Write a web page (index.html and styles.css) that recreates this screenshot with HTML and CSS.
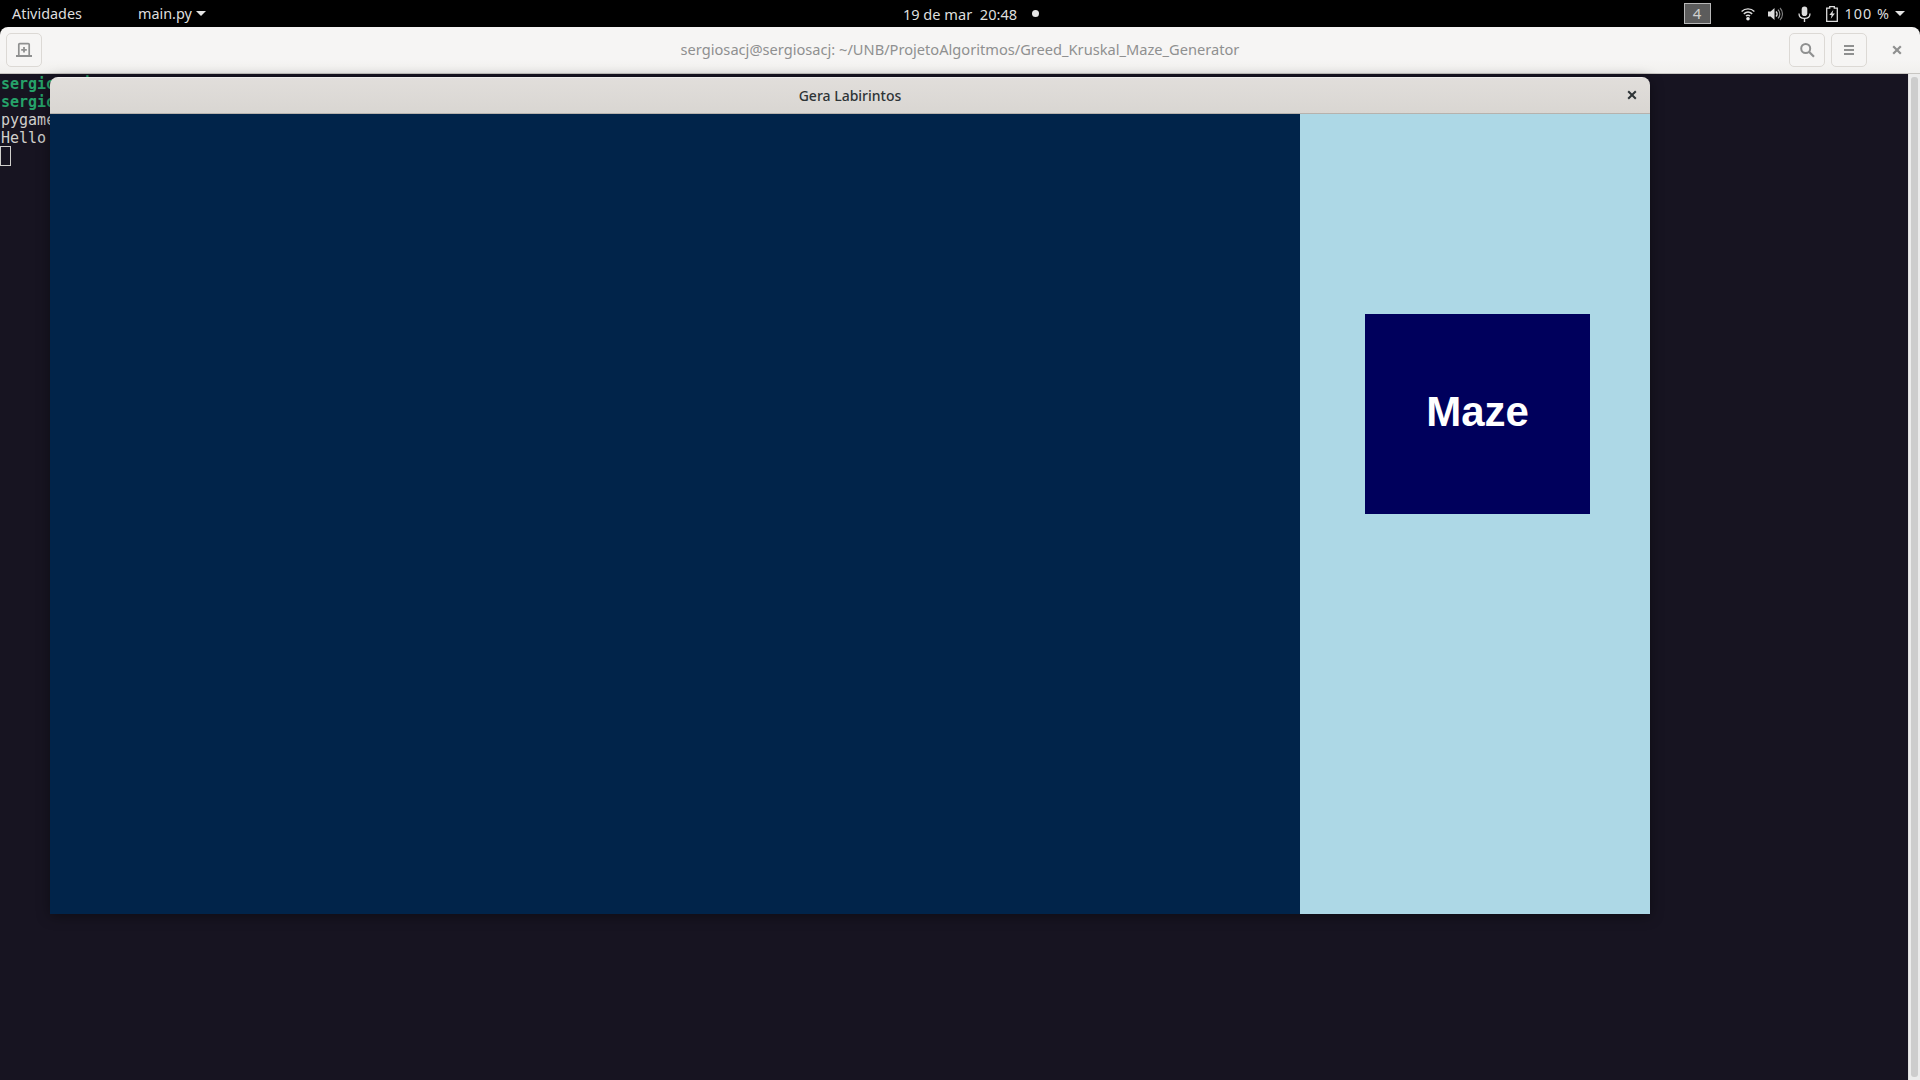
FILE: index.html
```html
<!DOCTYPE html>
<html lang="pt">
<head>
<meta charset="utf-8">
<title>Gera Labirintos</title>
<link rel="stylesheet" href="styles.css">
</head>
<body>
<div class="desktop">
  <header class="topbar">
    <div class="top-left">
      <span class="activities">Atividades</span>
      <span class="appmenu">main.py<span class="caret"></span></span>
    </div>
    <div class="top-center"><span>19 de mar&nbsp; 20:48</span><span class="dot"></span></div>
    <div class="top-right">
      <span class="workspace">4</span>
      <svg class="wifi" width="14" height="14" viewBox="0 0 14 14"><path d="M.6 4.500C4.200 1 9.800 1 13.400 4.500" fill="none" stroke="#dcdcdc" stroke-width="1.400"/><path d="M2.800 6.900c2.500-2.200 5.900-2.200 8.400 0" fill="none" stroke="#dcdcdc" stroke-width="1.400"/><path d="M4.900 9c1.300-1 2.900-1 4.200 0" fill="none" stroke="#dcdcdc" stroke-width="1.400"/><circle cx="7" cy="11.800" r="1.800" fill="#e8e8e8"/></svg>
      <svg class="vol" width="15" height="14" viewBox="0 0 15 14"><path d="M0 4.500h2.600L6.500 1v12L2.600 9.500H0z" fill="#dcdcdc"/><path d="M8 4.500a3.400 3.400 0 0 1 0 5" fill="none" stroke="#dcdcdc" stroke-width="1.400"/><path d="M10 2.600a6.200 6.200 0 0 1 0 8.800" fill="none" stroke="#a0a0a0" stroke-width="1.200"/><path d="M12 1a8.500 8.500 0 0 1 0 12" fill="none" stroke="#7c7c7c" stroke-width="1.100"/></svg>
      <svg class="mic" width="13" height="16" viewBox="0 0 13 16"><rect x="3.700" y=".5" width="5.600" height="9.500" rx="2.800" fill="#dcdcdc"/><path d="M1 7.400c0 3.300 2.400 5 5.500 5s5.500-1.700 5.500-5" fill="none" stroke="#dcdcdc" stroke-width="1.300"/><path d="M6.500 12v4" stroke="#dcdcdc" stroke-width="1.400"/></svg>
      <svg class="batt" width="12" height="16" viewBox="0 0 12 16"><path d="M3.700.7h4.600v1.500h3v13.100H.7V2.200h3z" fill="none" stroke="#dcdcdc" stroke-width="1.300"/><path d="M7.300 4 3.300 9h2.300l-.8 3.700L8.900 7.400H6.500z" fill="#dcdcdc"/></svg>
      <span class="pct">100 %<span class="caret pct-caret"></span></span>
    </div>
  </header>

  <section class="terminal">
    <div class="term-header">
      <button class="hbtn tab-btn" aria-label="Nova aba">
        <svg width="16" height="16" viewBox="0 0 16 16"><path d="M2.800 14V2.600a1 1 0 0 1 1-1h8.400a1 1 0 0 1 1 1V14" fill="none" stroke="#8f9090" stroke-width="1.700"/><path d="M0 14h16" stroke="#8f9090" stroke-width="2"/><path d="M8 5v5.600M5.200 7.800h5.600" stroke="#8f9090" stroke-width="1.800"/></svg>
      </button>
      <div class="term-title">sergiosacj@sergiosacj: ~/UNB/ProjetoAlgoritmos/Greed_Kruskal_Maze_Generator</div>
      <button class="hbtn" aria-label="Buscar">
        <svg width="16" height="16" viewBox="0 0 16 16"><circle cx="6.700" cy="6.500" r="4.500" fill="none" stroke="#8f9090" stroke-width="2"/><path d="M10 9.800l5 5" stroke="#8f9090" stroke-width="2.200"/></svg>
      </button>
      <button class="hbtn menu-btn" aria-label="Menu">
        <svg width="16" height="16" viewBox="0 0 16 16"><path d="M3 4h10M3 8h10M3 12h10" stroke="#8f9090" stroke-width="2"/></svg>
      </button>
      <button class="close-btn" aria-label="Fechar">
        <svg width="10" height="10" viewBox="0 0 10 10"><path d="M1.200 1.200l7.600 7.600M8.800 1.200L1.200 8.800" stroke="#8f9090" stroke-width="2.200"/></svg>
      </button>
    </div>
    <div class="term-body">
      <div class="term-text">
        <div class="prompt">sergiosacj</div>
        <div class="prompt">sergiosacj</div>
        <div>pygame</div>
        <div>Hello</div>
        <div class="cursor"></div>
      </div>
      <div class="scrollbar"><div class="thumb"></div></div>
    </div>
  </section>

  <section class="window">
    <div class="win-title">
      <span class="win-name">Gera Labirintos</span>
      <button class="win-close" aria-label="Fechar">
        <svg width="10" height="10" viewBox="0 0 10 10"><path d="M1.200 1.200l7.600 7.600M8.800 1.200L1.200 8.800" stroke="#2e3436" stroke-width="2"/></svg>
      </button>
    </div>
    <div class="win-body">
      <div class="maze-area"></div>
      <aside class="side"><div class="maze-btn">Maze</div></aside>
    </div>
  </section>
</div>
</body>
</html>
```
FILE: styles.css
```css
* { box-sizing: border-box; }
html, body { margin: 0; padding: 0; height: 100%; overflow: hidden; }
body { background: #000; font-family: "Noto Sans", sans-serif; }
button { border: 0; background: none; padding: 0; margin: 0; font: inherit; }

.desktop { position: relative; width: 1920px; height: 1080px; display: flex; flex-direction: column; background: #000; }

.topbar { height: 27px; flex: none; display: grid; grid-template-columns: 1fr auto 1fr; align-items: center; color: #dedede; font-size: 14.400px; }
.top-left { display: flex; align-items: center; padding-left: 12px; gap: 56px; }
.appmenu { display: flex; align-items: center; }
.caret { display: inline-block; width: 0; height: 0; margin-left: 4px; border-left: 5.500px solid transparent; border-right: 5.500px solid transparent; border-top: 5.500px solid #e4e4e4; }
.top-center { display: flex; align-items: center; gap: 15px; padding-left: 22px; font-size: 14.600px; }
.dot { width: 7px; height: 7px; border-radius: 50%; background: #e6e6e6; }
.top-right { display: flex; align-items: center; justify-content: flex-end; padding-right: 15px; }
.workspace { width: 27px; height: 21px; background: #5c5c5c; border: 1px solid #b8b8b8; color: #cfcfcf; font-size: 15px; line-height: 19px; text-align: center; margin-right: 30px; }
.wifi { margin-right: 13px; }
.vol { margin-right: 15px; }
.mic { margin-right: 15px; }
.batt { margin-right: 7px; }
.pct { display: flex; align-items: center; letter-spacing: 1px; }
.pct-caret { margin-left: 5px; }

.terminal { flex: 1; display: flex; flex-direction: column; min-height: 0; }
.term-header { height: 47px; flex: none; display: flex; align-items: center; padding: 0 8px 0 6px; border-radius: 8px 8px 0 0; border-bottom: 1px solid #c8c6c2; background: linear-gradient(#f6f5f4 70%, #f1f0ee); }
.hbtn { width: 36px; height: 34px; flex: none; display: flex; align-items: center; justify-content: center; border: 1px solid #dcd9d5; border-radius: 5px; background: #f6f5f4; }
.term-title { flex: 1; text-align: center; color: #8f9090; font-size: 14.640px; white-space: nowrap; padding-left: 89px; margin-top: -2px; }
.menu-btn { margin-left: 6px; }
.close-btn { width: 30px; height: 34px; margin-left: 15px; display: flex; align-items: center; justify-content: center; }

.term-body { flex: 1; display: flex; background: #171421; min-height: 0; }
.term-text { flex: 1; padding: 1px 0 0 1px; color: #d0cfcc; font: 15px/18px "DejaVu Sans Mono", monospace; }
.prompt { color: #26a269; font-weight: bold; }
.cursor { width: 11px; height: 20px; margin: -1px 0 0 -1px; border: 1px solid #d0cfcc; }
.scrollbar { width: 12px; flex: none; background: #ececec; border-left: 1px solid #e2e2e2; padding: 3px 2px 3px 2px; }
.thumb { height: 100%; border-radius: 3px; background: #cdcdcd; }

.window { position: absolute; left: 50px; top: 77px; width: 1600px; height: 837px; display: flex; flex-direction: column; border-radius: 8px 8px 0 0; box-shadow: 0 2px 14px rgba(0,0,0,.4); overflow: hidden; }
.win-title { position: relative; height: 37px; flex: none; display: flex; align-items: center; justify-content: center; background: linear-gradient(#e1dedb, #d9d6d2); border-top: 1px solid #eeecea; border-bottom: 1px solid #b6b2ad; color: #2e3436; font-size: 14px; font-weight: 500; }
.win-name { margin-top: -1px; }
.win-close { position: absolute; right: 12px; top: 11px; width: 12px; height: 12px; display: flex; align-items: center; justify-content: center; }
.win-body { flex: 1; display: flex; min-height: 0; }
.maze-area { width: 1250px; flex: none; background: #01244a; }
.side { flex: 1; background: #add8e6; padding: 200px 0 0 65px; }
.maze-btn { width: 225px; height: 200px; background: #00005c; color: #fff; font: bold 42px "Liberation Sans", sans-serif; display: flex; align-items: center; justify-content: center; padding-bottom: 4px; }
```
